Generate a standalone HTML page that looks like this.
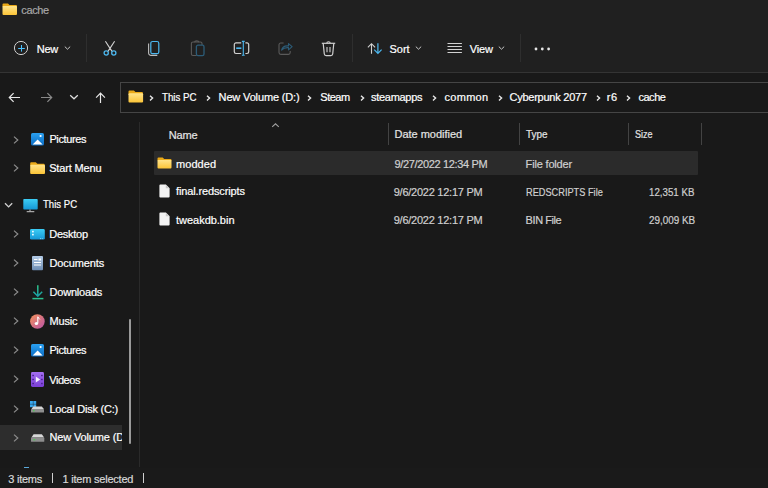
<!DOCTYPE html>
<html><head><meta charset="utf-8">
<style>
html,body{margin:0;padding:0;}
body{width:768px;height:488px;overflow:hidden;background:#191919;position:relative;font-family:"Liberation Sans",sans-serif;font-size:11px;color:#fff;}
.a{position:absolute;}
.t{position:absolute;white-space:nowrap;line-height:11px;font-size:11px;-webkit-text-stroke:0.2px currentColor;}
svg{position:absolute;overflow:visible;}
</style></head><body>
<svg width="0" height="0" style="left:0;top:0">
 <defs>
  <linearGradient id="fg" x1="0" y1="0" x2="0" y2="1"><stop offset="0" stop-color="#ffe48c"/><stop offset="1" stop-color="#fbc437"/></linearGradient>
  <linearGradient id="pg" x1="0" y1="0" x2="0" y2="1"><stop offset="0" stop-color="#2aa0f0"/><stop offset="1" stop-color="#0b6cc4"/></linearGradient>
  <linearGradient id="cg" x1="0" y1="0" x2="0" y2="1"><stop offset="0" stop-color="#3ccdf5"/><stop offset="1" stop-color="#1597d6"/></linearGradient>
  <linearGradient id="dg" x1="0" y1="0" x2="0" y2="1"><stop offset="0" stop-color="#b3cbe6"/><stop offset="1" stop-color="#6d8db3"/></linearGradient>
  <linearGradient id="wg" x1="0" y1="0" x2="0" y2="1"><stop offset="0" stop-color="#2fc486"/><stop offset="1" stop-color="#179ea8"/></linearGradient>
  <linearGradient id="mg" x1="0" y1="0" x2="1" y2="1"><stop offset="0" stop-color="#f5935a"/><stop offset="1" stop-color="#b952a8"/></linearGradient>
  <linearGradient id="vg" x1="0" y1="0" x2="0" y2="1"><stop offset="0" stop-color="#a46ff2"/><stop offset="1" stop-color="#7a3ed6"/></linearGradient>
 </defs>
</svg>

<!-- title + toolbar -->
<div class="a" style="left:0;top:0;width:768px;height:72px;background:#202020"></div>
<div class="a" style="left:0;top:72px;width:768px;height:1px;background:#343434"></div>
<!-- address row -->
<div class="a" style="left:0;top:73px;width:768px;height:48px;background:#191919"></div>
<div class="a" style="left:120px;top:82px;width:660px;height:29px;border:1px solid #454545;background:#191919"></div>

<svg style="left:2px;top:3px" width="16" height="12" viewBox="0 0 16 12">
 <path d="M1.5 0.5h4.5l1.5 1.5h6.5a1 1 0 0 1 1 1v1H0.5V1.5a1 1 0 0 1 1-1z" fill="#eaa918"/>
 <rect x="0.5" y="3" width="14.5" height="9" rx="1" fill="url(#fg)"/>
</svg>

<!-- toolbar -->
<svg style="left:13px;top:40px" width="16" height="16" viewBox="0 0 16 16">
 <circle cx="8" cy="8" r="6.6" fill="none" stroke="#cfcfcf" stroke-width="1"/>
 <path d="M8.5 5v6.6M5.2 8.5h6.6" stroke="#4cc2ff" stroke-width="1"/>
</svg>
<svg style="left:64px;top:46px" width="7" height="4" viewBox="0 0 7 4"><path d="M0.8 0.6L3.5 3.2L6.2 0.6" fill="none" stroke="#c8c8c8" stroke-width="1"/></svg>
<div class="a" style="left:86px;top:34px;width:1px;height:28px;background:#2e2e2e"></div>
<svg style="left:103px;top:40px" width="14" height="16" viewBox="0 0 14 16">
 <path d="M2.4 1.2L7 8.4M11.6 1.2L7 8.4" stroke="#cfcfcf" stroke-width="1.1" fill="none"/>
 <path d="M7 8.4L4.7 11.6M7 8.4L9.3 11.6" stroke="#cfcfcf" stroke-width="1.1" fill="none"/>
 <circle cx="3.2" cy="13" r="2.1" fill="none" stroke="#4cb8f0" stroke-width="1.3"/>
 <circle cx="10.8" cy="13" r="2.1" fill="none" stroke="#4cb8f0" stroke-width="1.3"/>
</svg>
<svg style="left:147px;top:40px" width="14" height="17" viewBox="0 0 14 17">
 <path d="M1.6 3.6v9.4a2.4 2.4 0 0 0 2.4 2.4h6.3" fill="none" stroke="#bdbdbd" stroke-width="1.1"/>
 <rect x="3.8" y="1.5" width="8" height="12.2" rx="1.8" fill="none" stroke="#4cb8f0" stroke-width="1.2"/>
</svg>
<svg style="left:190px;top:40px" width="16" height="17" viewBox="0 0 16 17">
 <path d="M6.5 15.5H3a1.6 1.6 0 0 1-1.6-1.6V3.6A1.6 1.6 0 0 1 3 2h7.4A1.6 1.6 0 0 1 12 3.6V5" fill="none" stroke="#5a5a5a" stroke-width="1.1"/>
 <path d="M4.6 2.2a2.1 1.3 0 0 1 4.2 0" fill="none" stroke="#5a5a5a" stroke-width="1.1"/>
 <rect x="6.4" y="5.2" width="7.6" height="10.4" rx="1.6" fill="none" stroke="#2c5c78" stroke-width="1.3"/>
</svg>
<svg style="left:233px;top:41px" width="18" height="17" viewBox="0 0 18 17">
 <path d="M8.2 1.9H3a1.7 1.7 0 0 0-1.7 1.7v7.2a1.7 1.7 0 0 0 1.7 1.7h5.2" fill="none" stroke="#d0d0d0" stroke-width="1.2"/>
 <path d="M12.4 1.9H14a1.7 1.7 0 0 1 1.7 1.7v7.2a1.7 1.7 0 0 1-1.7 1.7h-1.6" fill="none" stroke="#d0d0d0" stroke-width="1.2"/>
 <path d="M3.2 7.2h5.2" stroke="#4cb8f0" stroke-width="1.6"/>
 <path d="M10.3 0.4v13.8M8.9 0.4h2.8M8.9 14.2h2.8" stroke="#4cb8f0" stroke-width="1.1" fill="none"/>
</svg>
<svg style="left:278px;top:41px" width="16" height="15" viewBox="0 0 16 15">
 <path d="M5.6 2H2.8a1.8 1.8 0 0 0-1.8 1.8v7.8a1.8 1.8 0 0 0 1.8 1.8h7.6a1.8 1.8 0 0 0 1.8-1.8V10" fill="none" stroke="#5a5a5a" stroke-width="1.1"/>
 <path d="M3.6 9.2c0.6-2.8 2.4-4.3 5.6-4.3h1.3V2.6l3.6 3.1l-3.6 3.1V6.6H9.3c-2.3 0-4.1 0.8-5.7 2.6z" fill="none" stroke="#2c5c78" stroke-width="1.1" stroke-linejoin="round"/>
</svg>
<svg style="left:321px;top:40px" width="15" height="17" viewBox="0 0 15 17">
 <path d="M0.8 3.3h13.4" stroke="#d0d0d0" stroke-width="1.2"/>
 <path d="M5.8 3.2a1.7 1.4 0 0 1 3.4 0" fill="none" stroke="#d0d0d0" stroke-width="1.1"/>
 <path d="M2.2 3.4l1.1 10.6a1.8 1.8 0 0 0 1.8 1.6h4.8a1.8 1.8 0 0 0 1.8-1.6l1.1-10.6" fill="none" stroke="#d0d0d0" stroke-width="1.2"/>
 <path d="M6 7v5.2M9 7v5.2" stroke="#d0d0d0" stroke-width="1.1"/>
</svg>
<div class="a" style="left:352px;top:34px;width:1px;height:28px;background:#2e2e2e"></div>
<svg style="left:366px;top:42px" width="17" height="13" viewBox="0 0 17 13">
 <path d="M5.5 11.8V1.7M1.9 5.3L5.5 1.7L9.1 5.3" fill="none" stroke="#d2d2d2" stroke-width="1.1"/>
 <path d="M11.9 1.2V11.3M8.2 7.6L11.9 11.3L15.6 7.6" fill="none" stroke="#4cb8f0" stroke-width="1.2"/>
</svg>
<svg style="left:415px;top:46px" width="7" height="4" viewBox="0 0 7 4"><path d="M0.8 0.6L3.5 3.2L6.2 0.6" fill="none" stroke="#c8c8c8" stroke-width="1"/></svg>
<svg style="left:447px;top:42px" width="16" height="12" viewBox="0 0 16 12">
 <path d="M0.5 1.5h14.4M0.5 4.5h14.4M0.5 7.5h14.4M0.5 10.5h14.4" stroke="#d2d2d2" stroke-width="1.1"/>
</svg>
<svg style="left:498px;top:46px" width="7" height="4" viewBox="0 0 7 4"><path d="M0.8 0.6L3.5 3.2L6.2 0.6" fill="none" stroke="#c8c8c8" stroke-width="1"/></svg>
<div class="a" style="left:520px;top:34px;width:1px;height:28px;background:#2e2e2e"></div>
<svg style="left:534px;top:47px" width="17" height="4" viewBox="0 0 17 4">
 <circle cx="2" cy="2" r="1.4" fill="#e6e6e6"/><circle cx="8.3" cy="2" r="1.4" fill="#e6e6e6"/><circle cx="14.6" cy="2" r="1.4" fill="#e6e6e6"/>
</svg>

<!-- nav buttons -->
<svg style="left:8px;top:92px" width="13" height="11" viewBox="0 0 13 11">
 <path d="M12 5.5H1.4M5.6 1.2L1.3 5.5L5.6 9.8" fill="none" stroke="#e8e8e8" stroke-width="1.2"/>
</svg>
<svg style="left:40px;top:92px" width="13" height="11" viewBox="0 0 13 11">
 <path d="M1 5.5H11.6M7.4 1.2L11.7 5.5L7.4 9.8" fill="none" stroke="#8a8a8a" stroke-width="1.2"/>
</svg>
<svg style="left:69px;top:94px" width="10" height="6" viewBox="0 0 10 6">
 <path d="M1.2 1.2L5 4.8L8.8 1.2" fill="none" stroke="#e0e0e0" stroke-width="1.2"/>
</svg>
<svg style="left:95px;top:92px" width="12" height="12" viewBox="0 0 12 12">
 <path d="M5.5 11V1.2M1.1 5.6L5.5 1.2L9.9 5.6" fill="none" stroke="#e8e8e8" stroke-width="1.2"/>
</svg>
<svg style="left:128px;top:89.5px" width="16" height="13" viewBox="0 0 16 13">
 <path d="M1.6 0.5h4.3l1.6 1.6h6.4a1.1 1.1 0 0 1 1.1 1.1v1.2H0.5V1.6a1.1 1.1 0 0 1 1.1-1.1z" fill="#eaa918"/>
 <rect x="0.5" y="3.2" width="14.6" height="9.3" rx="1.1" fill="url(#fg)"/>
</svg>
<svg style="left:148.6px;top:94.5px" width="5" height="7" viewBox="0 0 5 7"><path d="M1 0.7L3.6 3.1L1 5.5" fill="none" stroke="#e6e6e6" stroke-width="1.4"/></svg>
<svg style="left:205.7px;top:94.5px" width="5" height="7" viewBox="0 0 5 7"><path d="M1 0.7L3.6 3.1L1 5.5" fill="none" stroke="#e6e6e6" stroke-width="1.4"/></svg>
<svg style="left:306.7px;top:94.5px" width="5" height="7" viewBox="0 0 5 7"><path d="M1 0.7L3.6 3.1L1 5.5" fill="none" stroke="#e6e6e6" stroke-width="1.4"/></svg>
<svg style="left:360.2px;top:94.5px" width="5" height="7" viewBox="0 0 5 7"><path d="M1 0.7L3.6 3.1L1 5.5" fill="none" stroke="#e6e6e6" stroke-width="1.4"/></svg>
<svg style="left:432.3px;top:94.5px" width="5" height="7" viewBox="0 0 5 7"><path d="M1 0.7L3.6 3.1L1 5.5" fill="none" stroke="#e6e6e6" stroke-width="1.4"/></svg>
<svg style="left:498.0px;top:94.5px" width="5" height="7" viewBox="0 0 5 7"><path d="M1 0.7L3.6 3.1L1 5.5" fill="none" stroke="#e6e6e6" stroke-width="1.4"/></svg>
<svg style="left:595.8px;top:94.5px" width="5" height="7" viewBox="0 0 5 7"><path d="M1 0.7L3.6 3.1L1 5.5" fill="none" stroke="#e6e6e6" stroke-width="1.4"/></svg>
<svg style="left:625.7px;top:94.5px" width="5" height="7" viewBox="0 0 5 7"><path d="M1 0.7L3.6 3.1L1 5.5" fill="none" stroke="#e6e6e6" stroke-width="1.4"/></svg>

<!-- nav pane -->
<div class="a" style="left:0;top:425px;width:122px;height:25px;background:#2d2d2d"></div>
<div class="a" style="left:129px;top:319px;width:2px;height:125px;background:#9a9a9a;border-radius:1px"></div>
<div class="a" style="left:139px;top:122px;width:1px;height:345px;background:#2a2a2a"></div>
<!-- column header -->
<div class="a" style="left:388px;top:123px;width:1px;height:22px;background:#434343"></div>
<div class="a" style="left:519px;top:123px;width:1px;height:22px;background:#434343"></div>
<div class="a" style="left:628px;top:123px;width:1px;height:22px;background:#434343"></div>
<div class="a" style="left:701px;top:123px;width:1px;height:22px;background:#434343"></div>
<svg style="left:271px;top:122.5px" width="9" height="5" viewBox="0 0 9 5"><path d="M1.2 3.9L4.5 0.8L7.8 3.9" fill="none" stroke="#a0a0a0" stroke-width="1.1"/></svg>
<!-- selected row -->
<div class="a" style="left:154px;top:151px;width:544px;height:24px;background:#2b2b2b;border-radius:1px"></div>
<svg style="left:157px;top:157px" width="15" height="12" viewBox="0 0 15 12">
 <path d="M1.5 0.5h4.2l1.5 1.5h6.3a1 1 0 0 1 1 1v1H0.5V1.5a1 1 0 0 1 1-1z" fill="#eaa918"/>
 <rect x="0.5" y="2.9" width="14" height="8.6" rx="1" fill="url(#fg)"/>
</svg>
<svg style="left:159px;top:184px" width="11" height="14" viewBox="0 0 11 14">
 <path d="M1.4 0.4h5.4l3.8 3.8v8.4a1 1 0 0 1-1 1H1.4a1 1 0 0 1-1-1V1.4a1 1 0 0 1 1-1z" fill="#f2f2f2"/>
 <path d="M6.8 0.4v3.8h3.8" fill="#c8c8c8"/>
</svg>
<svg style="left:159px;top:212px" width="11" height="14" viewBox="0 0 11 14">
 <path d="M1.4 0.4h5.4l3.8 3.8v8.4a1 1 0 0 1-1 1H1.4a1 1 0 0 1-1-1V1.4a1 1 0 0 1 1-1z" fill="#f2f2f2"/>
 <path d="M6.8 0.4v3.8h3.8" fill="#c8c8c8"/>
</svg>
<svg style="left:13px;top:135.5px" width="6" height="8" viewBox="0 0 6 8"><path d="M1 0.6L4.8 4L1 7.4" fill="none" stroke="#8c8c8c" stroke-width="1.2"/></svg>
<svg style="left:13px;top:164.3px" width="6" height="8" viewBox="0 0 6 8"><path d="M1 0.6L4.8 4L1 7.4" fill="none" stroke="#8c8c8c" stroke-width="1.2"/></svg>
<svg style="left:13px;top:229.5px" width="6" height="8" viewBox="0 0 6 8"><path d="M1 0.6L4.8 4L1 7.4" fill="none" stroke="#8c8c8c" stroke-width="1.2"/></svg>
<svg style="left:13px;top:258.8px" width="6" height="8" viewBox="0 0 6 8"><path d="M1 0.6L4.8 4L1 7.4" fill="none" stroke="#8c8c8c" stroke-width="1.2"/></svg>
<svg style="left:13px;top:287.9px" width="6" height="8" viewBox="0 0 6 8"><path d="M1 0.6L4.8 4L1 7.4" fill="none" stroke="#8c8c8c" stroke-width="1.2"/></svg>
<svg style="left:13px;top:317.0px" width="6" height="8" viewBox="0 0 6 8"><path d="M1 0.6L4.8 4L1 7.4" fill="none" stroke="#8c8c8c" stroke-width="1.2"/></svg>
<svg style="left:13px;top:346.0px" width="6" height="8" viewBox="0 0 6 8"><path d="M1 0.6L4.8 4L1 7.4" fill="none" stroke="#8c8c8c" stroke-width="1.2"/></svg>
<svg style="left:13px;top:375.3px" width="6" height="8" viewBox="0 0 6 8"><path d="M1 0.6L4.8 4L1 7.4" fill="none" stroke="#8c8c8c" stroke-width="1.2"/></svg>
<svg style="left:13px;top:404.5px" width="6" height="8" viewBox="0 0 6 8"><path d="M1 0.6L4.8 4L1 7.4" fill="none" stroke="#8c8c8c" stroke-width="1.2"/></svg>
<svg style="left:13px;top:433.5px" width="6" height="8" viewBox="0 0 6 8"><path d="M1 0.6L4.8 4L1 7.4" fill="none" stroke="#8c8c8c" stroke-width="1.2"/></svg>
<svg style="left:3.6px;top:201.5px" width="10" height="7" viewBox="0 0 10 7"><path d="M1 1.2L4.6 4.9L8.2 1.2" fill="none" stroke="#d0d0d0" stroke-width="1.35"/></svg>
<svg style="left:31px;top:133.0px" width="13" height="13" viewBox="0 0 13 13">
 <rect x="0" y="0" width="13" height="12.5" rx="1.6" fill="url(#pg)"/>
 <path d="M1.6 11.4L6.6 6.6L11.6 11.4z" fill="#fff"/>
 <circle cx="9.6" cy="3" r="1.1" fill="#fff"/>
</svg>
<svg style="left:31px;top:344.0px" width="13" height="13" viewBox="0 0 13 13">
 <rect x="0" y="0" width="13" height="12.5" rx="1.6" fill="url(#pg)"/>
 <path d="M1.6 11.4L6.6 6.6L11.6 11.4z" fill="#fff"/>
 <circle cx="9.6" cy="3" r="1.1" fill="#fff"/>
</svg>
<svg style="left:30px;top:162px" width="15" height="12" viewBox="0 0 15 12">
 <path d="M1.5 0.2h4.3l1.5 1.5h6.4a1 1 0 0 1 1 1v1H0.2V1.5a1.2 1.2 0 0 1 1.3-1.3z" fill="#eaa918"/>
 <rect x="0.2" y="2.7" width="14.8" height="9.2" rx="1" fill="url(#fg)"/>
</svg>
<svg style="left:22.5px;top:198.5px" width="15" height="14" viewBox="0 0 15 14">
 <rect x="0.3" y="0" width="14.4" height="10.6" rx="0.8" fill="url(#cg)"/>
 <path d="M7 10.6v1.6M3.7 12.7h7.6" stroke="#c8c8c8" stroke-width="1"/>
</svg>
<svg style="left:30px;top:228.5px" width="15" height="11" viewBox="0 0 15 11">
 <rect x="0" y="0" width="14.8" height="10.6" rx="1.4" fill="url(#cg)"/>
 <rect x="2" y="1.8" width="1.8" height="1.6" fill="#e8f8ff"/><rect x="2" y="4.8" width="1.8" height="1.6" fill="#e8f8ff"/>
 <path d="M10 9.6h0.8M11.8 9.6h0.8" stroke="#bfefff" stroke-width="0.8"/>
</svg>
<svg style="left:32px;top:256px" width="11" height="15" viewBox="0 0 11 15">
 <rect x="0" y="0" width="11" height="14.3" rx="1" fill="url(#dg)"/>
 <path d="M2 3.5h3.5M2 6.5h7M2 9h7" stroke="#fff" stroke-width="1"/>
 <rect x="6.5" y="2.5" width="2.6" height="2" fill="#fff"/>
</svg>
<svg style="left:31.5px;top:284.5px" width="12" height="15" viewBox="0 0 12 15">
 <path d="M5.8 0.3V11M1.4 6.8L5.8 11.2L10.2 6.8" fill="none" stroke="url(#wg)" stroke-width="1.5"/>
 <path d="M0.4 13.6h11" stroke="#2cbf8f" stroke-width="1.5"/>
</svg>
<svg style="left:30px;top:314px" width="15" height="15" viewBox="0 0 15 15">
 <circle cx="7.4" cy="7.5" r="7.3" fill="url(#mg)"/>
 <path d="M7.8 2.8v6.4" stroke="#fff" stroke-width="1.1"/>
 <path d="M7.8 2.8c0.3 1.3 1.6 1.6 2 2.6" stroke="#fff" stroke-width="1" fill="none"/>
 <ellipse cx="6.4" cy="9.6" rx="1.7" ry="1.5" fill="#fff"/>
</svg>
<svg style="left:31px;top:372px" width="13" height="15" viewBox="0 0 13 15">
 <rect x="0" y="0" width="13" height="15" rx="1.4" fill="url(#vg)"/>
 <rect x="1.3" y="2.8" width="1.6" height="1.4" fill="#4a2090"/><rect x="1.3" y="6.8" width="1.6" height="1.4" fill="#4a2090"/><rect x="1.3" y="10.8" width="1.6" height="1.4" fill="#4a2090"/>
 <rect x="10.1" y="2.8" width="1.6" height="1.4" fill="#4a2090"/><rect x="10.1" y="6.8" width="1.6" height="1.4" fill="#4a2090"/><rect x="10.1" y="10.8" width="1.6" height="1.4" fill="#4a2090"/>
 <path d="M4.8 4.6L9.2 7.5L4.8 10.4z" fill="#f4eeff"/>
</svg>
<svg style="left:30px;top:401px" width="15" height="12" viewBox="0 0 15 12">
 <rect x="0" y="0" width="2.9" height="2.9" fill="#38a8f0"/><rect x="3.3" y="0" width="2.9" height="2.9" fill="#38a8f0"/>
 <rect x="0" y="3.3" width="2.9" height="2.9" fill="#38a8f0"/><rect x="3.3" y="3.3" width="2.9" height="2.9" fill="#38a8f0"/>
 <path d="M1.5 8L3.2 5.4H11.8L13.9 8z" fill="#d6d6d6"/>
 <rect x="1" y="8" width="13" height="3.6" rx="0.6" fill="#8e8e8e"/>
 <rect x="3" y="9.3" width="1.6" height="1" fill="#3fd34a"/>
</svg>
<svg style="left:31px;top:434px" width="14" height="8" viewBox="0 0 14 8">
 <path d="M0.4 3.6L2.6 0.2H10.8L13.2 3.6z" fill="#d8d8d8"/>
 <rect x="0" y="3.6" width="13.3" height="4.2" rx="0.6" fill="#8e8e8e"/>
 <rect x="2.4" y="5.2" width="1.8" height="1.1" fill="#3fd34a"/>
</svg>
<!-- network icon peek -->
<div class="a" style="left:24px;top:466.5px;width:5px;height:1px;background:#5aa8d8"></div>

<div class="a" style="left:0;top:468px;width:768px;height:20px;background:#1a1a1a"></div>
<div class="a" style="left:52px;top:473px;width:1px;height:10px;background:#cfcfcf"></div>
<div class="a" style="left:143px;top:473px;width:1px;height:10px;background:#cfcfcf"></div>
<div class="t" style="left:21.35px;top:4.75px;color:#a8a8a8;letter-spacing:-0.396px;">cache</div>
<div class="t" style="left:36.70px;top:43.70px;color:#ffffff;letter-spacing:-0.231px;">New</div>
<div class="t" style="left:389.40px;top:43.90px;color:#ffffff;letter-spacing:0.027px;">Sort</div>
<div class="t" style="left:469.70px;top:43.90px;color:#ffffff;letter-spacing:-0.167px;">View</div>
<div class="t" style="left:162.40px;top:91.90px;color:#ffffff;letter-spacing:0.000px;transform:scaleX(0.8832);transform-origin:0.00px 0;">This PC</div>
<div class="t" style="left:218.60px;top:91.90px;color:#ffffff;letter-spacing:-0.148px;">New Volume (D:)</div>
<div class="t" style="left:320.30px;top:91.90px;color:#ffffff;letter-spacing:-0.482px;">Steam</div>
<div class="t" style="left:371.00px;top:91.90px;color:#ffffff;letter-spacing:-0.288px;">steamapps</div>
<div class="t" style="left:444.50px;top:91.90px;color:#ffffff;letter-spacing:0.288px;">common</div>
<div class="t" style="left:509.50px;top:91.90px;color:#ffffff;letter-spacing:-0.246px;">Cyberpunk 2077</div>
<div class="t" style="left:606.70px;top:91.90px;color:#ffffff;letter-spacing:0.637px;">r6</div>
<div class="t" style="left:638.40px;top:91.90px;color:#ffffff;letter-spacing:-0.459px;">cache</div>
<div class="t" style="left:168.70px;top:129.60px;color:#e4e4e4;letter-spacing:-0.108px;">Name</div>
<div class="t" style="left:394.60px;top:129.30px;color:#e4e4e4;letter-spacing:-0.029px;">Date modified</div>
<div class="t" style="left:525.60px;top:129.30px;color:#e4e4e4;letter-spacing:0.000px;transform:scaleX(0.9018);transform-origin:0.00px 0;">Type</div>
<div class="t" style="left:634.50px;top:129.30px;color:#e4e4e4;letter-spacing:0.000px;transform:scaleX(0.8223);transform-origin:0.00px 0;">Size</div>
<div class="t" style="left:176.00px;top:158.60px;color:#ffffff;letter-spacing:0.073px;">modded</div>
<div class="t" style="left:176.00px;top:186.40px;color:#ffffff;letter-spacing:-0.134px;">final.redscripts</div>
<div class="t" style="left:176.00px;top:214.50px;color:#ffffff;letter-spacing:-0.019px;">tweakdb.bin</div>
<div class="t" style="left:394.60px;top:158.70px;color:#d0d0d0;letter-spacing:-0.354px;">9/27/2022 12:34 PM</div>
<div class="t" style="left:393.75px;top:186.60px;color:#d0d0d0;letter-spacing:-0.253px;">9/6/2022 12:17 PM</div>
<div class="t" style="left:393.75px;top:214.70px;color:#d0d0d0;letter-spacing:-0.253px;">9/6/2022 12:17 PM</div>
<div class="t" style="left:525.60px;top:158.70px;color:#d0d0d0;letter-spacing:-0.173px;">File folder</div>
<div class="t" style="left:525.60px;top:186.60px;color:#d0d0d0;letter-spacing:0.000px;transform:scaleX(0.8377);transform-origin:0.00px 0;">REDSCRIPTS File</div>
<div class="t" style="left:525.60px;top:214.70px;color:#d0d0d0;letter-spacing:-0.429px;">BIN File</div>
<div class="t" style="left:649.30px;top:186.60px;color:#d0d0d0;letter-spacing:0.000px;transform:scaleX(0.8837);transform-origin:0.00px 0;">12,351 KB</div>
<div class="t" style="left:648.50px;top:214.70px;color:#d0d0d0;letter-spacing:0.000px;transform:scaleX(0.8993);transform-origin:0.00px 0;">29,009 KB</div>
<div class="t" style="left:49.40px;top:134.10px;color:#ffffff;letter-spacing:-0.376px;">Pictures</div>
<div class="t" style="left:49.20px;top:162.80px;color:#ffffff;letter-spacing:-0.165px;">Start Menu</div>
<div class="t" style="left:42.75px;top:199.40px;color:#ffffff;letter-spacing:0.000px;transform:scaleX(0.8705);transform-origin:0.00px 0;">This PC</div>
<div class="t" style="left:49.20px;top:228.60px;color:#ffffff;letter-spacing:-0.239px;">Desktop</div>
<div class="t" style="left:49.50px;top:257.90px;color:#ffffff;letter-spacing:-0.110px;">Documents</div>
<div class="t" style="left:49.50px;top:286.80px;color:#ffffff;letter-spacing:-0.202px;">Downloads</div>
<div class="t" style="left:49.50px;top:315.90px;color:#ffffff;letter-spacing:-0.181px;">Music</div>
<div class="t" style="left:49.40px;top:344.80px;color:#ffffff;letter-spacing:-0.376px;">Pictures</div>
<div class="t" style="left:49.20px;top:374.50px;color:#ffffff;letter-spacing:-0.427px;">Videos</div>
<div class="t" style="left:49.50px;top:403.70px;color:#ffffff;letter-spacing:-0.247px;">Local Disk (C:)</div>
<div class="t" style="left:49.50px;top:432.40px;color:#ffffff;letter-spacing:-0.148px;width:72px;overflow:hidden;">New Volume (D:)</div>
<div class="t" style="left:8.30px;top:473.60px;color:#d8d8d8;letter-spacing:-0.259px;">3 items</div>
<div class="t" style="left:62.50px;top:473.60px;color:#d8d8d8;letter-spacing:-0.219px;">1 item selected</div>
</body></html>
